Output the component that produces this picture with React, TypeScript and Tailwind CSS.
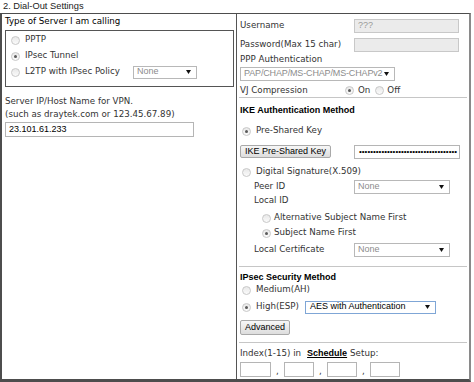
import clsx from 'clsx'

function Radio({ checked }: { checked?: boolean }) {
  return (
    <span className="flex h-[9px] w-[9px] shrink-0 items-center justify-center rounded-full border border-[#c8c8c8] bg-gradient-to-b from-[#e8e8e8] to-[#fbfbfb]">
      {checked && <span className="h-[3px] w-[3px] rounded-full bg-[#5a5a5a]" />}
    </span>
  )
}

function Select({ value, className, dim = true, blue = false }: { value: string; className?: string; dim?: boolean; blue?: boolean }) {
  return (
    <div
      className={clsx(
        "flex shrink-0 items-center justify-between overflow-hidden border bg-white pl-[3px] pr-[5px] font-['Liberation_Sans',Arial,sans-serif] text-[9px]",
        blue ? 'border-[#7fa6d6]' : 'border-[#b8b8b8]',
        dim ? 'text-[#8c8c8c]' : 'text-black',
        className
      )}
    >
      <span className="whitespace-nowrap">{value}</span>
      <svg width="5" height="4" viewBox="0 0 5 4" className="shrink-0">
        <path d="M0 0H5L2.5 4Z" fill="#111" />
      </svg>
    </div>
  )
}

function Button({ label, className }: { label: string; className?: string }) {
  return (
    <div
      className={clsx(
        "flex shrink-0 items-center justify-center rounded-[2px] border border-[#a9a9a9] bg-gradient-to-b from-[#f7f7f7] to-[#dddddd] font-['Liberation_Sans',Arial,sans-serif] text-[9px] text-black",
        className
      )}
    >
      {label}
    </div>
  )
}

const Divider = () => <div className="ml-[2px] mr-[2px] h-px bg-[#c6c6c6]" />

export default function App() {
  return (
    <div className="h-[382px] w-[474px] overflow-hidden bg-white font-['DejaVu_Sans',Verdana,sans-serif] text-[8.7px] text-[#333]">
      <div className="flex h-[13px] items-center pl-[3px] font-['Liberation_Sans',Arial,sans-serif] text-[9.3px] text-[#222]">
        2. Dial-Out Settings
      </div>

      <div className="flex h-[369px] w-[471px] border-t border-b-[3px] border-l-2 border-r-2 border-[#4d4d4d] border-r-[#8a8a8a]">
        {/* Left: server type */}
        <div className="w-[235px] shrink-0 border-r border-[#555] pl-[3px]">
          <div className="mt-[1px] flex h-[14px] items-center text-black">Type of Server I am calling</div>
          <div className="mt-[1px] h-[57px] w-[229px] border border-[#555] pl-[5px] pt-[1px]">
            <div className="flex h-[16px] items-center">
              <Radio />
              <span className="ml-[5px]">PPTP</span>
            </div>
            <div className="flex h-[16px] items-center">
              <Radio checked />
              <span className="ml-[5px]">IPsec Tunnel</span>
            </div>
            <div className="flex h-[16px] items-center">
              <Radio />
              <span className="ml-[5px] w-[108px]">L2TP with IPsec Policy</span>
              <Select value="None" className="h-[13px] w-[64px]" />
            </div>
          </div>
          <div className="mt-[8px] leading-[13px]">
            <div>Server IP/Host Name for VPN.</div>
            <div>(such as draytek.com or 123.45.67.89)</div>
          </div>
          <div className="mt-[1px] flex h-[15px] w-[189px] items-center border border-[#b5b5b5] pl-[3px] font-['Liberation_Sans',Arial,sans-serif] text-[9px] text-black">
            23.101.61.233
          </div>
        </div>

        {/* Right: auth & security */}
        <div className="flex-1">
          <div className="mt-[4px] flex h-[15px] items-center">
            <span className="w-[117px] shrink-0 pl-[3px]">Username</span>
            <div className="flex h-[14px] w-[105px] items-center border border-[#c8c8c8] bg-[#ebebeb] pl-[3px] font-['Liberation_Sans',Arial,sans-serif] text-[9px] text-[#999]">
              ???
            </div>
          </div>
          <div className="mt-[4px] flex h-[15px] items-center">
            <span className="w-[117px] shrink-0 pl-[3px]">Password(Max 15 char)</span>
            <div className="h-[14px] w-[105px] border border-[#c8c8c8] bg-[#ebebeb]" />
          </div>
          <div className="mt-[1px] flex h-[14px] items-center pl-[3px]">PPP Authentication</div>
          <div className="flex h-[14px] pl-[3px]">
            <Select value="PAP/CHAP/MS-CHAP/MS-CHAPv2" className="h-[14px] w-[155px] pl-[2px] pr-[4px] tracking-[-0.15px]" />
          </div>
          <div className="mt-[3px] flex h-[13px] items-center">
            <span className="w-[108px] shrink-0 pl-[3px]">VJ Compression</span>
            <Radio checked />
            <span className="ml-[4px]">On</span>
            <span className="ml-[5px]">
              <Radio />
            </span>
            <span className="ml-[3px]">Off</span>
          </div>
          <Divider />

          <div className="mt-[6px] flex h-[14px] items-center pl-[3px] font-['Liberation_Sans',Arial,sans-serif] text-[9px] font-bold text-black">
            IKE Authentication Method
          </div>
          <div className="mt-[6px] flex h-[14px] items-center pl-[5px]">
            <Radio checked />
            <span className="ml-[5px]">Pre-Shared Key</span>
          </div>
          <div className="mt-[6px] flex h-[15px] items-center pl-[3px]">
            <Button label="IKE Pre-Shared Key" className="h-[13px] w-[91px]" />
            <div className="ml-[23px] flex h-[14px] w-[106px] items-center overflow-hidden border border-[#b5b5b5] bg-white pl-[4px] font-['Liberation_Sans',Arial,sans-serif] text-[8px] leading-none text-black">
              •••••••••••••••••••••••••••••••••••
            </div>
          </div>
          <div className="mt-[6px] flex h-[14px] items-center pl-[5px]">
            <Radio />
            <span className="ml-[5px]">Digital Signature(X.509)</span>
          </div>
          <div className="flex h-[15px] items-center">
            <span className="w-[117px] shrink-0 pl-[17px]">Peer ID</span>
            <Select value="None" className="h-[14px] w-[96px]" />
          </div>
          <div className="flex h-[14px] items-center pl-[17px]">Local ID</div>
          <div className="mt-[3px] flex h-[14px] items-center pl-[25px]">
            <Radio />
            <span className="ml-[3px]">Alternative Subject Name First</span>
          </div>
          <div className="mt-[1px] flex h-[14px] items-center pl-[25px]">
            <Radio checked />
            <span className="ml-[3px]">Subject Name First</span>
          </div>
          <div className="mt-[2px] flex h-[15px] items-center">
            <span className="w-[117px] shrink-0 pl-[17px]">Local Certificate</span>
            <Select value="None" className="h-[14px] w-[96px]" />
          </div>

          <div className="mt-[9px]">
            <Divider />
          </div>
          <div className="mt-[4px] flex h-[13px] items-center pl-[3px] font-['Liberation_Sans',Arial,sans-serif] text-[9px] font-bold text-black">
            IPsec Security Method
          </div>
          <div className="flex h-[12px] items-center pl-[5px]">
            <Radio />
            <span className="ml-[5px]">Medium(AH)</span>
          </div>
          <div className="mt-[4px] flex h-[14px] items-center pl-[5px]">
            <Radio checked />
            <span className="ml-[5px] w-[49px] shrink-0">High(ESP)</span>
            <Select value="AES with Authentication" dim={false} blue className="h-[13px] w-[131px] pl-[4px]" />
          </div>
          <div className="mt-[6px] pl-[3px]">
            <Button label="Advanced" className="h-[15px] w-[50px]" />
          </div>

          <div className="mt-[7px]">
            <Divider />
          </div>
          <div className="mt-[4px] flex h-[14px] items-center pl-[3px]">
            <span>Index(1-15) in</span>
            <span className="ml-[6px] font-['Liberation_Sans',Arial,sans-serif] text-[9px] font-bold text-black underline">Schedule</span>
            <span className="ml-[3px]">Setup:</span>
          </div>
          <div className="mt-[1px] flex h-[15px] items-end pl-[3px]">
            <div className="h-[15px] w-[31px] border border-[#b5b5b5]" />
            <span className="w-[13px] text-center leading-[12px]">,</span>
            <div className="h-[15px] w-[30px] border border-[#b5b5b5]" />
            <span className="w-[13px] text-center leading-[12px]">,</span>
            <div className="h-[15px] w-[30px] border border-[#b5b5b5]" />
            <span className="w-[13px] text-center leading-[12px]">,</span>
            <div className="h-[15px] w-[30px] border border-[#b5b5b5]" />
          </div>
        </div>
      </div>
    </div>
  )
}
